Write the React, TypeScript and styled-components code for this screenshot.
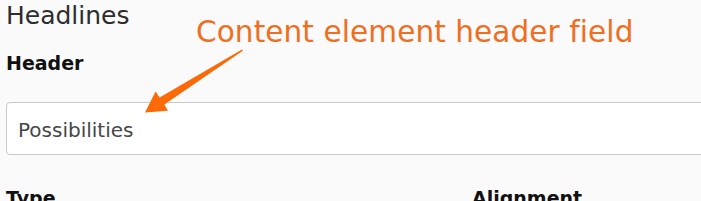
import React from "react";
import styled, { createGlobalStyle } from "styled-components";

const Global = createGlobalStyle`
  html, body { margin: 0; padding: 0; background: #fafafa; }
  body { font-family: "DejaVu Sans", Verdana, sans-serif; overflow: hidden; }
`;

const Page = styled.div`
  position: relative;
  width: 701px;
  height: 201px;
  overflow: hidden;
  padding-left: 6px;
  box-sizing: border-box;
`;

const Title = styled.h1`
  margin: 1px 0 0 0;
  font-size: 25px;
  line-height: 30px;
  font-weight: normal;
  color: #2d2d2d;
`;

const Label = styled.div<{ $top?: number }>`
  margin-top: ${(p) => p.$top ?? 0}px;
  font-size: 19px;
  line-height: 22px;
  font-weight: bold;
  color: #111;
  white-space: nowrap;
`;

const Field = styled.div`
  margin-top: 28px;
  width: 720px;
  height: 53px;
  box-sizing: border-box;
  border: 1px solid #c9c9c9;
  border-radius: 4px;
  background: #fff;
  display: flex;
  align-items: center;
  padding: 2px 0 0 11px;
  font-size: 20px;
  color: #474747;
`;

const Row = styled.div`
  display: grid;
  grid-template-columns: 466px 1fr;
  margin-top: 32px;
`;

const Note = styled.div`
  position: absolute;
  left: 196px;
  top: 18px;
  font-size: 29.5px;
  line-height: 29px;
  letter-spacing: 0.1px;
  color: #f06e1e;
  white-space: nowrap;
`;

const Overlay = styled.svg`
  position: absolute;
  left: 0;
  top: 0;
  pointer-events: none;
`;

export default function App() {
  return (
    <Page>
      <Global />
      <Title>Headlines</Title>
      <Label $top={21}>Header</Label>
      <Field>Possibilities</Field>
      <Row>
        <Label>Type</Label>
        <Label>Alignment</Label>
      </Row>
      <Note>Content element header field</Note>
      <Overlay width="701" height="201" viewBox="0 0 701 201">
        <polygon
          points="242,49.5 242.8,50.8 164.4,104.4 168,110.8 145,112.5 155.6,91.6 159.6,97.6"
          fill="#fb6a07"
        />
      </Overlay>
    </Page>
  );
}
